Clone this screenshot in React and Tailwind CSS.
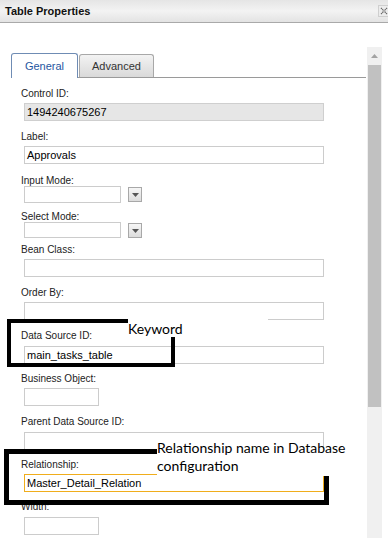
import React from "react";

const fields = [
  { label: "Control ID:", value: "1494240675267", kind: "readonly", lab: "mt-[10px]", inp: "mt-[3px]" },
  { label: "Label:", value: "Approvals", kind: "text", lab: "mt-[10px]", inp: "mt-[3px]" },
  { label: "Input Mode:", kind: "select", lab: "mt-[11px]", inp: "-mt-[1px] h-[17px]" },
  { label: "Select Mode:", kind: "select", lab: "mt-[8px]", inp: "-mt-[1px] h-[16px]" },
  { label: "Bean Class:", kind: "text", lab: "mt-[6px]", inp: "mt-[3px]" },
  { label: "Order By:", kind: "text", lab: "mt-[10px]", inp: "mt-[3px]" },
  { label: "Data Source ID:", value: "main_tasks_table", kind: "text", lab: "mt-[10px]", inp: "mt-[4px]" },
  { label: "Business Object:", kind: "short", lab: "mt-[9px]", inp: "mt-[3px]" },
  { label: "Parent Data Source ID:", kind: "text", lab: "mt-[10px]", inp: "mt-[4px]" },
  { label: "Relationship:", value: "Master_Detail_Relation", kind: "focus", lab: "mt-[9px]", inp: "mt-[3px]" },
  { label: "Width:", kind: "short", lab: "mt-[9px]", inp: "mt-[4px]" },
];

const Field = ({ f }) => {
  let box = "w-[300px] h-[18px] border border-[#cccccc] bg-white";
  if (f.kind === "readonly") box = "w-[300px] h-[18px] border border-[#cfcfcf] bg-[#e6e6e6] text-[#333]";
  if (f.kind === "focus") box = "w-[300px] h-[18px] border border-[#f0ad1c] bg-white";
  if (f.kind === "short") box = "w-[75px] h-[18px] border border-[#cccccc] bg-white";

  return (
    <div>
      <div className={`${f.lab} h-[12px] text-[10px] leading-[12px] text-[#222]`}>{f.label}</div>
      {f.kind === "select" ? (
        <div className={`${f.inp} ml-[3px] flex items-start`}>
          <div className="w-[97px] h-full border border-[#cccccc] bg-white"></div>
          <div className="ml-[7px] mt-[1px] w-[14px] h-[15px] border border-[#a8a8a8] bg-linear-to-b from-[#f6f6f6] to-[#dcdcdc] flex items-center justify-center">
            <svg width="7" height="4" viewBox="0 0 7 4">
              <path d="M0 0 L7 0 L3.5 4 Z" fill="#555" />
            </svg>
          </div>
        </div>
      ) : (
        <div className={`${f.inp} ml-[3px] ${box} pl-[2px] text-[11px] leading-[16px] text-black`}>
          {f.value || ""}
        </div>
      )}
    </div>
  );
};

export default function App() {
  return (
    <div
      className="relative w-[388px] h-[538px] overflow-hidden bg-white"
      style={{ fontFamily: '"Liberation Sans", Arial, sans-serif' }}
    >
      {/* title bar */}
      <div className="h-[23px] border-b border-[#a9a9a9] bg-linear-to-b from-[#e5e5e5] via-[#f3f3f3] to-[#e3e3e3] flex items-start">
        <div className="pl-[5px] pt-[5px] text-[11px] leading-[13px] font-bold text-[#111]">Table Properties</div>
        <div className="ml-auto mt-[5px] -mr-[2px] w-[12px] h-[12px] border border-[#cfcfcf] bg-[#ececec] flex items-center justify-center">
          <svg width="8" height="8" viewBox="0 0 8 8">
            <path d="M1 1 L7 7 M7 1 L1 7" stroke="#6a6a6a" strokeWidth="1.3" strokeDasharray="1.2 0.6" />
          </svg>
        </div>
      </div>

      <div className="flex">
        {/* main column */}
        <div className="w-[367px] pt-[30px]">
          <div className="ml-[11px] mr-[1px] flex items-end border-b border-[#9a9a9a] h-[25px]">
            <div className="-mb-[1px] w-[67px] h-[25px] border border-b-0 border-[#6f8cb4] rounded-t-[3px] bg-white flex items-center justify-center text-[11px] text-[#1f56a0]">
              General
            </div>
            <div className="ml-[1px] w-[75px] h-[23px] border border-b-0 border-[#a8a8a8] rounded-t-[3px] bg-linear-to-b from-[#f3f3f3] to-[#d9d9d9] flex items-center justify-center text-[11px] text-[#333]">
              Advanced
            </div>
          </div>
          <div className="pl-[21px]">
            {fields.map((f) => (
              <Field key={f.label} f={f} />
            ))}
          </div>
        </div>

        {/* scrollbar */}
        <div className="mt-[24px] w-[15px] h-[491px] bg-[#f0f0f0] flex flex-col items-center">
          <div className="h-[17px] w-full flex items-center justify-center">
            <svg width="7" height="4" viewBox="0 0 7 4">
              <path d="M0 4 L7 4 L3.5 0 Z" fill="#a3a3a3" />
            </svg>
          </div>
          <div className="mt-[1px] w-[13px] h-[342px] bg-[#c1c1c1]"></div>
        </div>
      </div>

      {/* annotations */}
      <div className="absolute left-[7px] top-[319px] w-[168px] h-[48px] border-[4px] border-black"></div>
      <div
        className="absolute left-[128px] top-[318px] w-[140px] h-[19px] bg-white pt-[2px] text-[14px] leading-[17px] text-black"
        style={{ fontFamily: "Lato, sans-serif" }}
      >
        Keyword
      </div>

      <div className="absolute left-[4px] top-[449px] w-[325px] h-[56px] border-[5px] border-black"></div>
      <div className="absolute left-[157px] top-[449px] w-[195px] h-[27px] bg-white"></div>
      <div
        className="absolute left-[157px] top-[439px] text-[14px] leading-[17.5px] text-black"
        style={{ fontFamily: "Lato, sans-serif" }}
      >
        Relationship name in Database
        <br />
        configuration
      </div>
    </div>
  );
}
